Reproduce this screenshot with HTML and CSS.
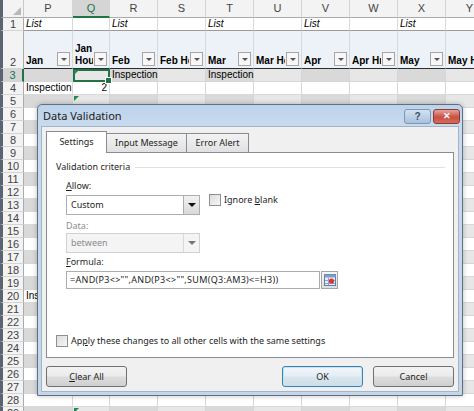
FILE: index.html
```html
<!DOCTYPE html>
<html lang="en">
<head>
    <meta charset="UTF-8">
    <title>Data Validation</title>
    <link rel="stylesheet" href="styles.css">
</head>
<body>

    <!-- Worksheet behind the dialog, filled in by the script below -->
    <div class="sheet" id="sheet"></div>

    <div class="dialog">
        <div class="titlebar">
            <span class="title">Data Validation</span>
            <div class="caption-btns">
                <span class="cap help">?</span>
                <span class="cap close">&#x2715;</span>
            </div>
        </div>

        <div class="dlg-body">
            <div class="tabs">
                <span class="tab active">Settings</span>
                <span class="tab tab-input">Input Message</span>
                <span class="tab tab-error">Error Alert</span>
            </div>

            <div class="panel">
                <div class="group-title">Validation criteria</div>

                <div class="criteria">
                    <div class="lbl lbl-allow"><u>A</u>llow:</div>
                    <div class="row">
                        <div class="combo">
                            <span class="combo-text">Custom</span>
                            <span class="drop"></span>
                        </div>
                        <div class="check ignore"><span class="box"></span><span>Ignore <u>b</u>lank</span></div>
                    </div>

                    <div class="lbl lbl-data dim">Data:</div>
                    <div class="combo disabled">
                        <span class="combo-text">between</span>
                        <span class="drop"></span>
                    </div>

                    <div class="lbl lbl-formula"><u>F</u>ormula:</div>
                    <div class="row">
                        <div class="formula">=AND(P3&lt;&gt;"",AND(P3&lt;&gt;"",SUM(Q3:AM3)&lt;=H3))</div>
                        <span class="pick">
                            <svg width="12" height="12" viewBox="0 0 12 12">
                                <rect x="0.5" y="0.5" width="11" height="11" fill="#e8eef7" stroke="#5a7fb3"/>
                                <rect x="0.5" y="0.5" width="11" height="3" fill="#7d9fcc"/>
                                <line x1="1" y1="6.5" x2="11" y2="6.5" stroke="#8aa6cf"/>
                                <line x1="1" y1="9.5" x2="11" y2="9.5" stroke="#8aa6cf"/>
                                <line x1="4.5" y1="4" x2="4.5" y2="11" stroke="#8aa6cf"/>
                                <circle cx="7.5" cy="7" r="2.6" fill="#e2312d"/>
                            </svg>
                        </span>
                    </div>
                </div>

                <div class="check apply"><span class="box"></span><span>Ap<u>p</u>ly these changes to all other cells with the same settings</span></div>
            </div>

            <div class="buttons">
                <button class="btn"><u>C</u>lear All</button>
                <button class="btn default">OK</button>
                <button class="btn">Cancel</button>
            </div>
        </div>
    </div>

    <script>
        const cols = ['P', 'Q', 'R', 'S', 'T', 'U', 'V', 'W', 'X', 'Y'];
        const heads = ['Jan', 'Jan Hours', 'Feb', 'Feb Hours', 'Mar', 'Mar Hours', 'Apr', 'Apr Hrs', 'May', 'May Hours'];
        const data = {
            1: { P: 'List', R: 'List', T: 'List', V: 'List', X: 'List' },
            3: { R: 'Inspection', T: 'Inspection' },
            4: { P: 'Inspection', Q: '2' },
            20: { P: 'Inspection' }
        };
        // cells that show the little green error triangle
        const errors = ['Q3', 'Q5', 'Q29'];

        const sheet = document.getElementById('sheet');

        function add(cls, text) {
            const d = document.createElement('div');
            d.className = cls;
            if (text !== undefined) d.textContent = text;
            sheet.appendChild(d);
            return d;
        }

        // column letters
        add('corner');
        cols.forEach(c => add(c === 'Q' ? 'col-head sel' : 'col-head', c));

        for (let r = 1; r <= 29; r++) {
            const head = add(r === 3 ? 'row-head sel' : 'row-head');
            head.innerHTML = '<span>' + r + '</span>';

            cols.forEach((c, i) => {
                let cls = 'cell';
                if (r === 1) cls += ' list';
                if (r === 2) cls += ' th';
                if (r > 2 && r % 2 === 1) cls += i % 2 === 0 ? ' band dark' : ' band';
                if (errors.includes(c + r)) cls += ' err';
                if (c + r === 'Q3') cls += ' active';

                const cell = add(cls);

                if (r === 2) {
                    const lbl = document.createElement('span');
                    lbl.className = c === 'Q' ? 'lbl-head wrap' : 'lbl-head';
                    lbl.textContent = heads[i];
                    const btn = document.createElement('span');
                    btn.className = 'filter';
                    cell.append(lbl, btn);
                    return;
                }

                const value = data[r] && data[r][c];
                if (value) {
                    const span = document.createElement('span');
                    span.textContent = value;
                    if (!isNaN(value)) cell.classList.add('num');
                    cell.appendChild(span);
                }
            });
        }
    </script>

</body>
</html>
```

FILE: styles.css
```css
html, body {
    margin: 0;
}

body {
    width: 474px;
    height: 411px;
    overflow: hidden;
    position: relative;
    background: #fff;
    font-family: "Liberation Sans", Arial, sans-serif;
    font-size: 10px;
    color: #000;
}

/* Worksheet grid */
.sheet {
    display: grid;
    grid-template-columns: 24px 49px 37px repeat(8, 48px);
    grid-template-rows: 18px 13px 38px;
    grid-auto-rows: 13px;
    width: 494px;
    height: 411px;
    overflow: hidden;
}

.corner,
.col-head,
.row-head,
.cell {
    box-sizing: border-box;
}

.corner {
    position: relative;
    background: #f3f3f3;
    border-left: 3px solid #5b6571;
    border-right: 1px solid #c8c8c8;
    border-bottom: 1px solid #ababab;
}

.corner::after {
    content: "";
    position: absolute;
    right: 2px;
    bottom: 2px;
    border-left: 8px solid transparent;
    border-bottom: 8px solid #b9b9b9;
}

.col-head {
    background: #f3f3f3;
    border-right: 1px solid #d4d4d4;
    border-bottom: 1px solid #ababab;
    color: #444;
    font-size: 11px;
    line-height: 17px;
    text-align: center;
}

.col-head.sel {
    background: #d5d5d5;
    color: #217346;
    border-bottom: 2px solid #217346;
}

.row-head {
    display: flex;
    align-items: flex-end;
    justify-content: center;
    background: #f3f3f3;
    border-left: 3px solid #5b6571;
    border-right: 1px solid #ababab;
    border-bottom: 1px solid #d4d4d4;
    color: #444;
    font-size: 11px;
    line-height: 12px;
}

.row-head.sel {
    background: #d5d5d5;
    color: #217346;
    border-right: 2px solid #217346;
}

.cell {
    position: relative;
    display: flex;
    align-items: flex-end;
    padding: 0 2px;
    border-right: 1px solid #d9d9d9;
    border-bottom: 1px solid #d9d9d9;
    line-height: 12px;
    white-space: nowrap;
}

.cell.num {
    justify-content: flex-end;
}

.cell.list {
    font-style: italic;
    border-bottom-color: #9a9a9a;
}

.cell.band {
    background: #e7e7e7;
    border-color: #d6d6d6;
}

.cell.band.dark {
    background: #d9d9d9;
}

/* table header row with filter buttons */
.cell.th {
    background: #edf2f8;
    border-bottom: 1px solid #2b2b2b;
    font-weight: bold;
    padding-right: 0;
}

.lbl-head {
    flex: 1;
    min-width: 0;
    overflow: hidden;
    padding-bottom: 1px;
}

.lbl-head.wrap {
    white-space: normal;
}

.filter {
    flex: none;
    display: flex;
    align-items: center;
    justify-content: center;
    width: 13px;
    height: 14px;
    margin: 0 2px 2px 1px;
    box-sizing: border-box;
    border: 1px solid #a6a6a6;
    background: #f7f7f7;
}

.filter::after {
    content: "";
    border-left: 3px solid transparent;
    border-right: 3px solid transparent;
    border-top: 3px solid #555;
}

.cell.active {
    outline: 2px solid #217346;
    outline-offset: -2px;
    z-index: 2;
}

.cell.active::after {
    content: "";
    position: absolute;
    right: -3px;
    bottom: -3px;
    width: 5px;
    height: 5px;
    background: #217346;
    border: 1px solid #fff;
}

.cell.err::before {
    content: "";
    position: absolute;
    left: 1px;
    top: 1px;
    border-top: 5px solid #1f8a4a;
    border-right: 5px solid transparent;
}

/* Data Validation dialog */
.dialog {
    position: absolute;
    left: 37px;
    top: 104px;
    width: 426px;
    height: 292px;
    box-sizing: border-box;
    display: flex;
    flex-direction: column;
    padding: 0 3px 3px;
    border: 1px solid #5f7083;
    border-radius: 5px 5px 0 0;
    background: linear-gradient(#bcd3eb, #c9dbee 22px, #c3d6ea);
    box-shadow: 0 0 5px rgba(0, 0, 0, .25);
    font-family: "Noto Sans", "Open Sans", sans-serif;
    font-size: 9px;
    color: #1e1e1e;
}

.titlebar {
    display: flex;
    align-items: flex-start;
    height: 21px;
    padding-left: 2px;
}

.title {
    font-size: 11px;
    line-height: 21px;
    color: #1b1b1b;
}

.caption-btns {
    display: flex;
    gap: 2px;
    margin-left: auto;
    margin-right: -1px;
    padding-top: 4px;
}

.cap {
    width: 27px;
    height: 15px;
    box-sizing: border-box;
    border-radius: 3px;
    text-align: center;
    font-family: "Liberation Sans", Arial, sans-serif;
    font-weight: bold;
    line-height: 13px;
}

.cap.help {
    border: 1px solid #7f97b3;
    background: linear-gradient(#d2e1f1, #a9c2de);
    color: #3c4f66;
    font-size: 10px;
}

.cap.close {
    border: 1px solid #8c3b33;
    background: linear-gradient(#e6a39a, #c94f42 55%, #d66a5d);
    color: #fff;
    font-size: 9px;
}

.dlg-body {
    flex: 1;
    display: flex;
    flex-direction: column;
    padding: 4px 4px 0 4px;
    border: 1px solid #a3b4c7;
    background: #f0f0f0;
}

.tabs {
    display: flex;
    align-items: flex-end;
    height: 21px;
    position: relative;
    z-index: 1;
}

.tab {
    height: 19px;
    box-sizing: border-box;
    border: 1px solid #898c95;
    border-bottom: none;
    margin-right: -1px;
    background: linear-gradient(#f3f3f3, #e1e1e1);
    text-align: center;
    line-height: 18px;
}

.tab.active {
    width: 61px;
    height: 22px;
    margin-bottom: -1px;
    background: #fff;
    line-height: 20px;
    position: relative;
    z-index: 1;
}

.tab-input {
    width: 81px;
}

.tab-error {
    width: 63px;
}

.panel {
    height: 206px;
    box-sizing: border-box;
    padding: 8px 8px 0 9px;
    border: 1px solid #898c95;
    background: #fff;
}

.group-title {
    display: flex;
    align-items: center;
    line-height: 12px;
}

.group-title::after {
    content: "";
    flex: 1;
    margin-left: 5px;
    border-top: 1px solid #dde1e6;
}

.criteria {
    padding-left: 10px;
}

.lbl {
    line-height: 12px;
}

.lbl-allow {
    margin-top: 7px;
}

.lbl-data {
    margin-top: 5px;
}

.lbl-formula {
    margin-top: 3px;
}

.dim {
    color: #8d8d8d;
}

.row {
    display: flex;
    align-items: flex-start;
}

.combo {
    display: flex;
    width: 134px;
    height: 20px;
    margin-top: 3px;
    box-sizing: border-box;
    border: 1px solid #abadb3;
    background: #fff;
}

.combo.disabled {
    margin-top: 1px;
    border-color: #cfd1d6;
    background: #f4f4f4;
    color: #8d8d8d;
}

.combo-text {
    flex: 1;
    padding-left: 4px;
    line-height: 18px;
}

.drop {
    display: flex;
    align-items: center;
    justify-content: center;
    width: 15px;
    border-left: 1px solid #adadad;
    background: linear-gradient(#f2f2f2, #d9d9d9);
}

.drop::after {
    content: "";
    border-left: 4px solid transparent;
    border-right: 4px solid transparent;
    border-top: 4px solid #111;
}

.combo.disabled .drop {
    border-left-color: #d9d9d9;
    background: #f4f4f4;
}

.combo.disabled .drop::after {
    border-top-color: #777;
}

.check {
    display: flex;
    align-items: center;
    line-height: 12px;
}

.box {
    width: 12px;
    height: 12px;
    margin-right: 3px;
    box-sizing: border-box;
    border: 1px solid #8e8f8f;
    background: linear-gradient(135deg, #dcdcdc, #f6f6f6);
}

.check.ignore {
    margin: 2px 0 0 9px;
}

.check.apply {
    margin-top: 46px;
}

.formula {
    width: 254px;
    height: 18px;
    margin-top: 3px;
    box-sizing: border-box;
    padding-left: 3px;
    border: 1px solid #abadb3;
    line-height: 16px;
    letter-spacing: .3px;
    white-space: nowrap;
    overflow: hidden;
}

.pick {
    display: flex;
    align-items: center;
    justify-content: center;
    width: 17px;
    height: 18px;
    margin: 3px 0 0 1px;
    box-sizing: border-box;
    border: 1px solid #a5a5a5;
    background: linear-gradient(#f7f7f7, #dedede);
}

/* Bottom buttons */
.buttons {
    display: flex;
    gap: 10px;
    margin-top: 8px;
}

.btn {
    width: 81px;
    height: 21px;
    padding: 0;
    border: 1px solid #707070;
    border-radius: 3px;
    background: linear-gradient(#f3f3f3 0%, #ebebeb 48%, #dddddd 52%, #cfcfcf 100%);
    font: inherit;
    color: #1e1e1e;
}

.btn.default {
    margin-left: auto;
    border-color: #3c7fb1;
    box-shadow: inset 0 0 0 1px #c4e5f6;
    background: linear-gradient(#f1f6fa 0%, #e5eef5 48%, #d9e6ef 52%, #cfdde8 100%);
}
```
